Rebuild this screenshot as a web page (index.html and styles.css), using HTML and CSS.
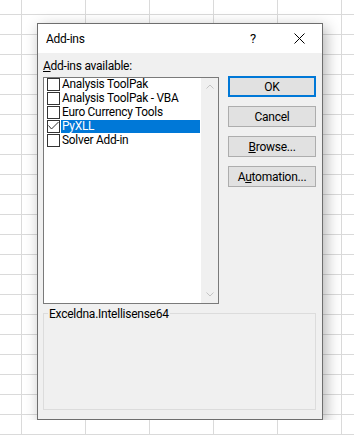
FILE: index.html
```html
<!DOCTYPE html>
<html lang="en">

<head>
    <meta charset="UTF-8">
    <meta name="viewport" content="width=device-width, initial-scale=1.0">
    <title>Add-ins</title>
    <link rel="stylesheet" href="styles.css">
</head>

<body>
    <div class="dialog">
        <div class="titlebar">
            <span class="title">Add-ins</span>
            <span class="tb-btn">?</span>
            <span class="tb-btn">
                <svg width="11" height="11" viewBox="0 0 11 11">
                    <path d="M0.5 0.5 L10.5 10.5 M10.5 0.5 L0.5 10.5" stroke="#000" stroke-width="1" fill="none" />
                </svg>
            </span>
        </div>

        <div class="content">
            <div class="label"><u>A</u>dd-ins available:</div>
            <div class="main">
                <div class="listbox">
                    <ul class="items">
                        <li><span class="check"></span><span class="name">Analysis ToolPak</span></li>
                        <li><span class="check"></span><span class="name">Analysis ToolPak - VBA</span></li>
                        <li><span class="check"></span><span class="name">Euro Currency Tools</span></li>
                        <li class="selected">
                            <span class="check">
                                <svg width="11" height="11" viewBox="0 0 11 11">
                                    <path d="M0.5 4.5 L3.5 8 L10.5 1" stroke="#333" stroke-width="1" fill="none" />
                                </svg>
                            </span>
                            <span class="name">PyXLL</span>
                        </li>
                        <li><span class="check"></span><span class="name">Solver Add-in</span></li>
                    </ul>
                    <div class="scrollbar">
                        <div class="arrow">
                            <svg width="8" height="5" viewBox="0 0 8 5">
                                <path d="M0.5 4.5 L4 1 L7.5 4.5" stroke="#c4c4c4" stroke-width="1" fill="none" />
                            </svg>
                        </div>
                        <div class="arrow">
                            <svg width="8" height="5" viewBox="0 0 8 5">
                                <path d="M0.5 0.5 L4 4 L7.5 0.5" stroke="#c4c4c4" stroke-width="1" fill="none" />
                            </svg>
                        </div>
                    </div>
                </div>

                <div class="buttons">
                    <button class="btn default">OK</button>
                    <button class="btn">Cancel</button>
                    <button class="btn"><u>B</u>rowse...</button>
                    <button class="btn">A<u>u</u>tomation...</button>
                </div>
            </div>

            <div class="group">
                <div class="group-label">Exceldna.Intellisense64</div>
            </div>
        </div>
    </div>
</body>

</html>
```

FILE: styles.css
```css
html {
    background-color: #fff;
    background-image:
        linear-gradient(to right, #dadada 1px, transparent 1px),
        linear-gradient(to bottom, #dadada 1px, transparent 1px);
    background-size: 64px 20px;
    background-position: 21px 14px;
}

body {
    margin: 0;
    font-family: "Segoe UI", Roboto, "Noto Sans", sans-serif;
    font-size: 12px;
    letter-spacing: -0.25px;
    color: #000;
}

ul {
    list-style: none;
    margin: 0;
    padding: 0;
}

.dialog {
    width: 286px;
    margin: 23px 0 0 37px;
    box-sizing: border-box;
    border: 1px solid #6e6e6e;
    background-color: #f0f0f0;
    box-shadow: 3px 4px 14px rgba(0, 0, 0, 0.3);
}

.titlebar {
    height: 29px;
    display: flex;
    align-items: center;
    background-color: #fff;
}

.title {
    flex: 1;
    padding-left: 8px;
}

.tb-btn {
    width: 46px;
    height: 29px;
    display: flex;
    align-items: center;
    justify-content: center;
    font-size: 13px;
}

.content {
    padding: 5px 6px 9px 5px;
}

.label {
    line-height: 16px;
    margin-bottom: 3px;
}

.main {
    display: flex;
    gap: 9px;
}

.listbox {
    width: 176px;
    height: 227px;
    box-sizing: border-box;
    border: 1px solid #7a7a7a;
    background-color: #fff;
    display: flex;
}

.items {
    flex: 1;
    padding: 0 1px 0 3px;
}

.items li {
    height: 14px;
    display: flex;
    align-items: flex-start;
}

.check {
    width: 13px;
    height: 13px;
    box-sizing: border-box;
    border: 1px solid #333;
    background-color: #fff;
    display: flex;
}

.name {
    flex: 1;
    height: 13px;
    line-height: 13px;
    margin-left: 1px;
    padding-left: 1px;
    font-size: 11.9px;
    white-space: nowrap;
}

.selected .name {
    background-color: #0078d7;
    color: #fff;
}

.scrollbar {
    width: 17px;
    background-color: #f0f0f0;
    display: flex;
    flex-direction: column;
    justify-content: space-between;
}

.arrow {
    height: 17px;
    display: flex;
    align-items: center;
    justify-content: center;
}

.buttons {
    margin-top: -1px;
    display: flex;
    flex-direction: column;
    gap: 9px;
}

.btn {
    width: 88px;
    height: 21px;
    box-sizing: border-box;
    padding: 0;
    border: 1px solid #adadad;
    background-color: #e1e1e1;
    font-family: inherit;
    font-size: 12px;
    letter-spacing: -0.25px;
    color: #000;
}

.btn.default {
    border: 2px solid #0078d7;
}

.group {
    margin-top: 9px;
    height: 97px;
    box-sizing: border-box;
    border: 1px solid #dcdcdc;
}

.group-label {
    width: fit-content;
    margin: -8px 0 0 4px;
    padding: 0 1px;
    line-height: 16px;
    background-color: #f0f0f0;
}
```
